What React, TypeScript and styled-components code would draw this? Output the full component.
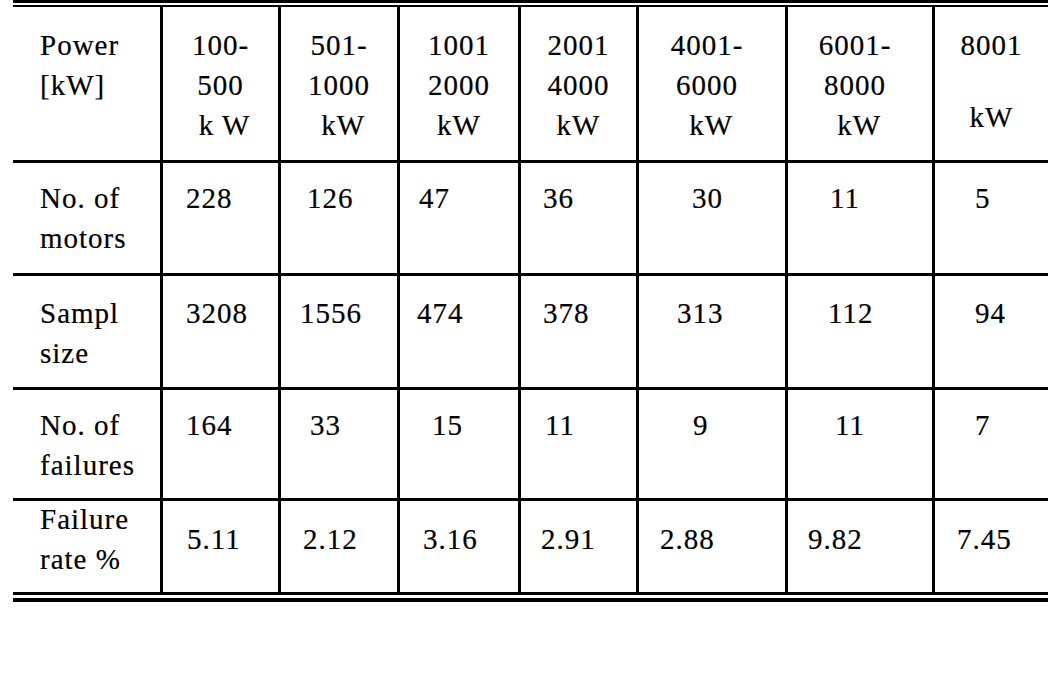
import React from 'react'
import styled, { createGlobalStyle } from 'styled-components'

const GlobalStyle = createGlobalStyle`
  html, body {
    margin: 0;
    padding: 0;
    background: #ffffff;
  }
  body {
    font-family: "Liberation Serif", "Times New Roman", serif;
    color: #000000;
  }
`

const Page = styled.div`
  width: 1061px;
  height: 695px;
  padding-left: 13px;
  box-sizing: border-box;
  background: #ffffff;
`

const Sheet = styled.div`
  width: 1035px;
`

const TopRule = styled.div`
  height: 2px;
  border-top: 3px solid #000;
  border-bottom: 2px solid #000;
`

const BottomRule = styled.div`
  height: 3px;
  border-top: 3px solid #000;
  border-bottom: 4px solid #000;
`

const Grid = styled.div`
  display: grid;
  grid-template-columns: 147px 118px 119px 121px 118px 149px 147px 116px;
  grid-template-rows: 156px 113px 114px 111px 91px;
`

const Cell = styled.div<{ $first?: boolean; $last?: boolean; $padTop: number; $padLeft: number; $center?: boolean; $shift?: number }>`
  box-sizing: border-box;
  border-left: ${p => (p.$first ? 'none' : '3px solid #000')};
  border-bottom: ${p => (p.$last ? 'none' : '3px solid #000')};
  padding-top: ${p => (p.$last ? 0 : p.$padTop)}px;
  padding-bottom: ${p => (p.$last ? 16 : 0)}px;
  padding-left: ${p => (p.$center ? 0 : p.$padLeft)}px;
  padding-right: ${p => p.$shift || 0}px;
  display: flex;
  flex-direction: column;
  justify-content: ${p => (p.$last ? 'center' : 'flex-start')};
  align-items: ${p => (p.$center ? 'center' : 'flex-start')};
  font-size: 29px;
  line-height: 40px;
  letter-spacing: 1px;
  -webkit-text-stroke: 0.2px #000;
  white-space: pre;
`

const Line = styled.div<{ $gap?: number }>`
  margin-top: ${p => p.$gap || 0}px;
`

const headers: { lines: string[]; shift?: number; gap?: number }[] = [
  { lines: ['100-', '500', ' k W'] },
  { lines: ['501-', '1000', ' kW'] },
  { lines: ['1001', '2000', 'kW'] },
  { lines: ['2001', '4000', 'kW'] },
  { lines: ['4001-', '6000', ' kW'], shift: 10 },
  { lines: ['6001-', '8000', ' kW'], shift: 10 },
  { lines: ['8001', 'kW'], gap: 32 },
]

// value text + its left padding inside the cell
const rows: { label: string[]; padTop: number; values: [string, number][] }[] = [
  {
    label: ['No. of', 'motors'],
    padTop: 15,
    values: [['228', 23], ['126', 26], ['47', 19], ['36', 22], ['30', 53], ['11', 42], ['5', 40]],
  },
  {
    label: ['Sampl', 'size'],
    padTop: 17,
    values: [['3208', 23], ['1556', 19], ['474', 17], ['378', 22], ['313', 38], ['112', 40], ['94', 40]],
  },
  {
    label: ['No. of', 'failures'],
    padTop: 15,
    values: [['164', 23], ['33', 29], ['15', 32], ['11', 24], ['9', 54], ['11', 47], ['7', 40]],
  },
  {
    label: ['Failure', 'rate %'],
    padTop: 0,
    values: [['5.11', 24], ['2.12', 22], ['3.16', 23], ['2.91', 20], ['2.88', 21], ['9.82', 20], ['7.45', 22]],
  },
]

export default function App() {
  return (
    <Page>
      <GlobalStyle />
      <Sheet>
        <TopRule />
        <Grid>
          <Cell $first $padTop={18} $padLeft={27}>
            <Line>Power</Line>
            <Line>[kW]</Line>
          </Cell>
          {headers.map((h, i) => (
            <Cell key={i} $padTop={18} $padLeft={0} $center $shift={h.shift}>
              {h.lines.map((l, j) => (
                <Line key={j} $gap={j > 0 ? h.gap : 0}>{l}</Line>
              ))}
            </Cell>
          ))}
          {rows.map((r, ri) => {
            const last = ri === rows.length - 1
            return (
              <React.Fragment key={ri}>
                <Cell $first $last={last} $padTop={r.padTop} $padLeft={27}>
                  {r.label.map((l, j) => (
                    <Line key={j}>{l}</Line>
                  ))}
                </Cell>
                {r.values.map(([v, pad], ci) => (
                  <Cell key={ci} $last={last} $padTop={r.padTop} $padLeft={pad}>
                    <Line>{v}</Line>
                  </Cell>
                ))}
              </React.Fragment>
            )
          })}
        </Grid>
        <BottomRule />
      </Sheet>
    </Page>
  )
}
